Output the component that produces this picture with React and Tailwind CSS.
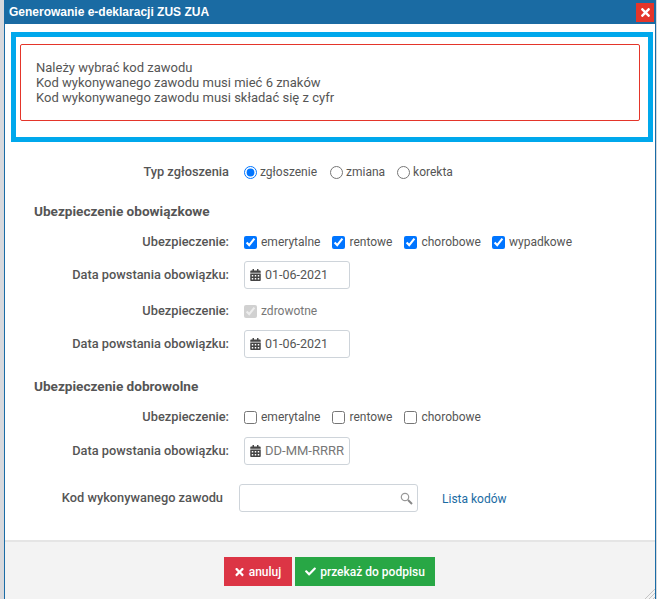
import { FaCalendarAlt, FaCheck, FaTimes } from 'react-icons/fa'

function Row({ label, className, children }) {
  return (
    <div className={`flex items-center ${className}`}>
      <div className="w-[224px] text-right font-medium text-[12.8px]">{label}</div>
      <div className="ml-[15px] flex items-center">{children}</div>
    </div>
  )
}

function Check({ label, checked, disabled, className }) {
  return (
    <label className={`flex items-center ${disabled ? 'text-[#777]' : ''} ${className || ''}`}>
      <input type="checkbox" defaultChecked={checked} disabled={disabled} className="m-0 w-[13px] h-[13px]" />
      <span className="ml-[4px]">{label}</span>
    </label>
  )
}

function Radio({ label, checked, className }) {
  return (
    <label className={`flex items-center ${className || ''}`}>
      <input type="radio" name="typ" defaultChecked={checked} className="m-0 w-[13px] h-[13px]" />
      <span className="ml-[3px]">{label}</span>
    </label>
  )
}

function DateInput({ value, placeholder }) {
  return (
    <div className="w-[106px] h-[28px] flex items-center bg-white border border-[#ced4da] rounded-[3px] pl-[5px]">
      <FaCalendarAlt className="text-[#444] w-[11px] h-[12px]" />
      <span className={`ml-[4px] ${placeholder ? 'text-[#777] text-[13px]' : 'text-[12.5px]'}`}>{value || placeholder}</span>
    </div>
  )
}

export default function App() {
  return (
    <div className="w-[657px] h-[599px] overflow-hidden bg-[#d8d9dd] pl-[4px] pr-[1px] font-['Roboto',sans-serif] text-[12px] text-[#555]">
      <div className="relative h-full flex flex-col bg-white border-x border-[#1a6ca6]">
        <div className="h-[24px] flex items-center justify-between bg-[#1a6ba3] pl-[4px] pr-[1px] shrink-0">
          <h1 className="text-white font-bold text-[12px] font-['Liberation_Sans',sans-serif]">Generowanie e-deklaracji ZUS ZUA</h1>
          <button className="w-[18px] h-[19px] flex items-center justify-center bg-[#e4352a] text-white">
            <FaTimes className="w-[13px] h-[13px]" />
          </button>
        </div>

        <div className="mt-[8px] ml-[6px] mr-[2px] h-[110px] border-[5px] border-[#00a8ec] pl-[4px] pr-[8px] pt-[7px]">
          <div className="h-[77px] border border-[#e4352a] rounded-[2px] pl-[15px] pt-[15px] text-[13px] leading-[15px]">
            <p>Należy wybrać kod zawodu</p>
            <p>Kod wykonywanego zawodu musi mieć 6 znaków</p>
            <p>Kod wykonywanego zawodu musi składać się z cyfr</p>
          </div>
        </div>

        <Row label="Typ zgłoszenia" className="mt-[22px] h-[16px]">
          <Radio label="zgłoszenie" checked />
          <Radio label="zmiana" className="ml-[13px]" />
          <Radio label="korekta" className="ml-[12px]" />
        </Row>

        <h2 className="mt-[23px] ml-[29px] h-[16px] leading-[16px] text-[13.6px] font-bold">Ubezpieczenie obowiązkowe</h2>

        <Row label="Ubezpieczenie:" className="mt-[15px] h-[16px]">
          <Check label="emerytalne" checked />
          <Check label="rentowe" checked className="ml-[12px]" />
          <Check label="chorobowe" checked className="ml-[12px]" />
          <Check label="wypadkowe" checked className="ml-[11px]" />
        </Row>
        <Row label="Data powstania obowiązku:" className="mt-[11px] h-[28px]">
          <DateInput value="01-06-2021" />
        </Row>
        <Row label="Ubezpieczenie:" className="mt-[14px] h-[16px]">
          <Check label="zdrowotne" checked disabled />
        </Row>
        <Row label="Data powstania obowiązku:" className="mt-[11px] h-[28px]">
          <DateInput value="01-06-2021" />
        </Row>

        <h2 className="mt-[20px] ml-[29px] h-[16px] leading-[16px] text-[13.6px] font-bold">Ubezpieczenie dobrowolne</h2>

        <Row label="Ubezpieczenie:" className="mt-[15px] h-[16px]">
          <Check label="emerytalne" />
          <Check label="rentowe" className="ml-[12px]" />
          <Check label="chorobowe" className="ml-[12px]" />
        </Row>
        <Row label="Data powstania obowiązku:" className="mt-[12px] h-[28px]">
          <DateInput placeholder="DD-MM-RRRR" />
        </Row>

        <div className="mt-[19px] h-[28px] flex items-center">
          <div className="w-[218px] text-right font-medium text-[12.8px]">Kod wykonywanego zawodu</div>
          <div className="ml-[16px] w-[179px] h-[28px] flex items-center justify-end bg-white border border-[#ced4da] rounded-[3px] pr-[4px]">
            <svg width="13" height="13" viewBox="0 0 13 13" fill="none">
              <circle cx="5" cy="5" r="3.7" stroke="#999" strokeWidth="1.2" />
              <path d="M8 8l4 4" stroke="#888" strokeWidth="2" />
            </svg>
          </div>
          <a className="ml-[24px] pt-[1px] text-[#1a6ba3]">Lista kodów</a>
        </div>

        <div className="mt-[28px] flex-1 flex justify-center gap-[3px] bg-[#f3f3f3] border-t-2 border-[#e5e5e5] pt-[15px] pr-[2px]">
          <button className="h-[29px] w-[68px] flex items-center justify-center bg-[#dc3545] text-white font-medium">
            <FaTimes className="w-[11px] h-[12px] mr-[4px]" />
            anuluj
          </button>
          <button className="h-[29px] w-[140px] flex items-center justify-center bg-[#28a745] text-white font-medium">
            <FaCheck className="w-[13px] h-[11px] mr-[3px]" />
            przekaż do podpisu
          </button>
        </div>

        <svg className="absolute right-0 bottom-0" width="11" height="11" viewBox="0 0 11 11" fill="none">
          <path d="M1 11L11 1M5 11L11 5M9 11L11 9" stroke="#c4c4c4" />
        </svg>
      </div>
    </div>
  )
}
